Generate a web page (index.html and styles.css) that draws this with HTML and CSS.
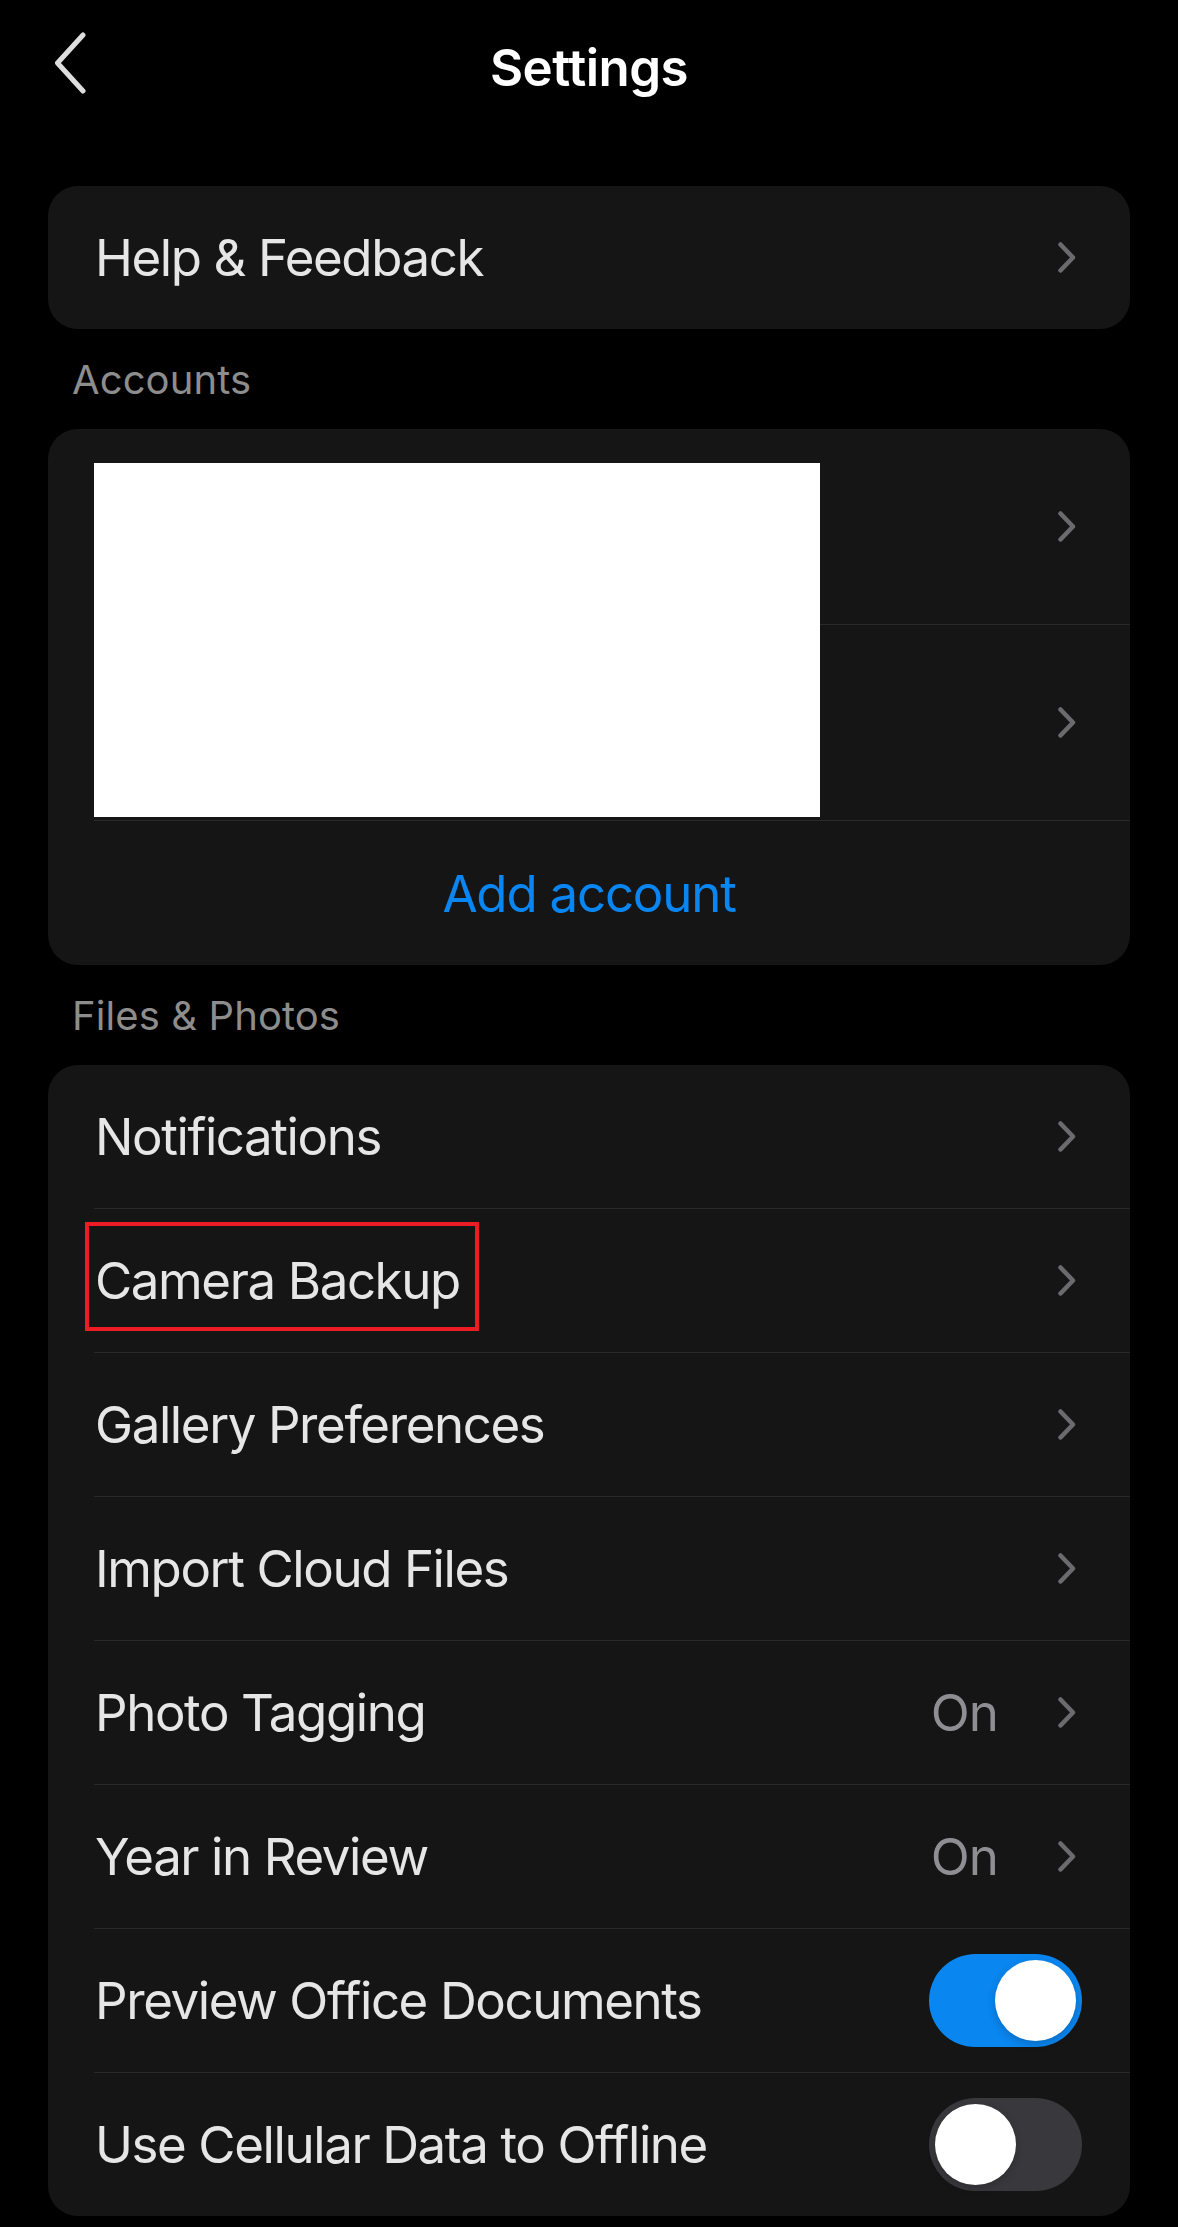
FILE: index.html
```html
<!DOCTYPE html>
<html lang="en">
<head>
  <meta charset="UTF-8">
  <meta name="viewport" content="width=device-width, initial-scale=1.0">
  <title>Settings</title>
  <link rel="stylesheet" href="styles.css">
</head>
<body>

<div class="page">

  <!-- Navigation bar -->
  <header class="nav">
    <button class="back" aria-label="Back">
      <svg width="32" height="62" viewBox="0 0 32 62"><path d="M29 3 L3.5 31 L29 59" /></svg>
    </button>
    <h1 class="title">Settings</h1>
    <span></span>
  </header>

  <main class="content">

    <!-- Help -->
    <section class="group">
      <div class="row">
        <span class="label">Help &amp; Feedback</span>
        <svg class="chevron" width="18" height="31" viewBox="0 0 18 31"><path d="M2.5 2.5 L15 15.5 L2.5 28.5" /></svg>
      </div>
    </section>

    <!-- Accounts -->
    <h2 class="group-title">Accounts</h2>
    <section class="group accounts">
      <div class="row account-row">
        <span class="label"></span>
        <svg class="chevron" width="18" height="31" viewBox="0 0 18 31"><path d="M2.5 2.5 L15 15.5 L2.5 28.5" /></svg>
      </div>
      <div class="row account-row">
        <span class="label"></span>
        <svg class="chevron" width="18" height="31" viewBox="0 0 18 31"><path d="M2.5 2.5 L15 15.5 L2.5 28.5" /></svg>
      </div>
      <div class="row add-row">
        <span class="link">Add account</span>
      </div>
      <div class="redact"></div>
    </section>

    <!-- Files & Photos -->
    <h2 class="group-title">Files &amp; Photos</h2>
    <section class="group">
      <div class="row">
        <span class="label">Notifications</span>
        <svg class="chevron" width="18" height="31" viewBox="0 0 18 31"><path d="M2.5 2.5 L15 15.5 L2.5 28.5" /></svg>
      </div>
      <div class="row">
        <span class="label">Camera Backup</span>
        <svg class="chevron" width="18" height="31" viewBox="0 0 18 31"><path d="M2.5 2.5 L15 15.5 L2.5 28.5" /></svg>
        <div class="highlight"></div>
      </div>
      <div class="row">
        <span class="label">Gallery Preferences</span>
        <svg class="chevron" width="18" height="31" viewBox="0 0 18 31"><path d="M2.5 2.5 L15 15.5 L2.5 28.5" /></svg>
      </div>
      <div class="row">
        <span class="label">Import Cloud Files</span>
        <svg class="chevron" width="18" height="31" viewBox="0 0 18 31"><path d="M2.5 2.5 L15 15.5 L2.5 28.5" /></svg>
      </div>
      <div class="row">
        <span class="label">Photo Tagging</span>
        <span class="value">On</span>
        <svg class="chevron" width="18" height="31" viewBox="0 0 18 31"><path d="M2.5 2.5 L15 15.5 L2.5 28.5" /></svg>
      </div>
      <div class="row">
        <span class="label">Year in Review</span>
        <span class="value">On</span>
        <svg class="chevron" width="18" height="31" viewBox="0 0 18 31"><path d="M2.5 2.5 L15 15.5 L2.5 28.5" /></svg>
      </div>
      <div class="row">
        <span class="label">Preview Office Documents</span>
        <span class="switch on"><span class="knob"></span></span>
      </div>
      <div class="row">
        <span class="label">Use Cellular Data to Offline</span>
        <span class="switch"><span class="knob"></span></span>
      </div>
    </section>

  </main>
</div>

</body>
</html>
```

FILE: styles.css
```css
/* Global Styles */
body {
  margin: 0;
  background-color: #000;
  font-family: Inter, "Noto Sans", sans-serif;
  color: #e6e6e6;
}
.page {
  width: 1178px;
}

/* Navigation bar */
.nav {
  display: grid;
  grid-template-columns: 1fr auto 1fr;
  align-items: center;
  height: 134px;
}
.back {
  justify-self: start;
  align-self: start;
  margin: 32px 0 0 54px;
  padding: 0;
  border: none;
  background: none;
  display: flex;
}
.back path {
  fill: none;
  stroke: #dedede;
  stroke-width: 5;
  stroke-linecap: round;
  stroke-linejoin: round;
}
.title {
  margin: 0;
  font-size: 51px;
  font-weight: 600;
  color: #fff;
  letter-spacing: -0.5px;
}

/* Groups */
.content {
  padding: 52px 48px 0;
}
.group {
  background-color: #151515;
  border-radius: 30px;
  overflow: hidden;
  position: relative;
}
.group-title {
  margin: 0;
  padding: 27px 0 25px 24px;
  font-size: 40px;
  line-height: 48px;
  font-weight: 400;
  color: #8d8d8d;
  letter-spacing: 0.1px;
}

/* Rows */
.row {
  display: flex;
  align-items: center;
  height: 143px;
  margin-left: 46px;
  padding-right: 48px;
  border-top: 1px solid #2a2a2a;
  position: relative;
}
.row:first-child {
  border-top: none;
}
.label {
  flex: 1;
  padding-left: 1px;
  font-size: 51px;
  letter-spacing: -1.4px;
  color: #e6e6e6;
}
.value {
  font-size: 51px;
  letter-spacing: -1px;
  color: #8e8e93;
  margin-right: 60px;
}
.chevron {
  margin-right: 6px;
}
.chevron path {
  fill: none;
  stroke: #6b6b6e;
  stroke-width: 4.5;
  stroke-linecap: round;
  stroke-linejoin: round;
}

/* Accounts */
.account-row {
  height: 195px;
}
.add-row {
  justify-content: center;
  padding-right: 46px;
  height: 144px;
}
.link {
  font-size: 51px;
  letter-spacing: -1.2px;
  color: #0a86f2;
}
.redact {
  position: absolute;
  left: 46px;
  top: 34px;
  width: 726px;
  height: 354px;
  background-color: #fff;
}

/* Annotation box */
.highlight {
  position: absolute;
  left: -9px;
  top: 13px;
  width: 394px;
  height: 109px;
  border: 4px solid #ec1c24;
  box-sizing: border-box;
}

/* Switches */
.switch {
  display: flex;
  align-items: center;
  width: 153px;
  height: 93px;
  padding: 0 6px;
  box-sizing: border-box;
  border-radius: 47px;
  background-color: #39393d;
}
.switch.on {
  justify-content: flex-end;
  background-color: #0a86f0;
}
.knob {
  width: 81px;
  height: 81px;
  border-radius: 50%;
  background-color: #fff;
  box-shadow: 0 3px 8px rgba(0, 0, 0, 0.2);
}
```
